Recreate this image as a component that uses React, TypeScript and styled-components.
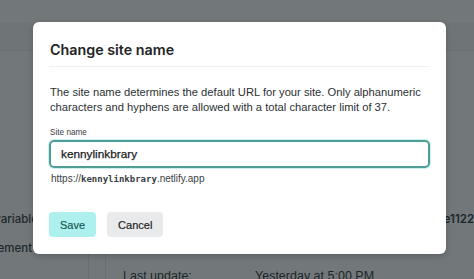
import React from "react";
import styled, { createGlobalStyle } from "styled-components";

const Global = createGlobalStyle`
  html, body { margin: 0; padding: 0; }
  body {
    width: 474px;
    height: 279px;
    overflow: hidden;
    background: #fff;
    font-family: "Liberation Sans", Arial, sans-serif;
  }
`;

const Page = styled.div`
  position: relative;
  width: 474px;
  height: 279px;
  overflow: hidden;
  display: flex;
  flex-direction: column;
`;

const Header = styled.div`
  flex-shrink: 0;
  height: 23px;
  background: #fff;
`;

const SubBar = styled.div`
  flex-shrink: 0;
  height: 27px;
  background: #f7f8f8;
  border-bottom: 1px solid #e6e8e9;
`;

const Body = styled.div`
  flex: 1;
  min-height: 0;
  overflow: hidden;
  display: flex;
`;

const Sidebar = styled.div`
  width: 88px;
  flex-shrink: 0;
  border-right: 1px solid #e4e6e7;
  display: flex;
  flex-direction: column;
  padding-top: 162px;
  gap: 16px;
  overflow: hidden;
`;

const SideItem = styled.div<{ $shift: number }>`
  margin-left: ${p => p.$shift}px;
  font-family: Inter, sans-serif;
  font-size: 11.5px;
  line-height: 13px;
  font-weight: 500;
  color: #2e3438;
  white-space: nowrap;
`;

const Gutter = styled.div`
  width: 16px;
  flex-shrink: 0;
  border-right: 1px solid #e4e6e7;
`;

const Main = styled.div`
  flex: 1;
  display: flex;
  flex-direction: column;
  padding-top: 162px;
  overflow: hidden;
`;

const IdRow = styled.div`
  align-self: flex-end;
  margin-right: -14px;
  font-family: Inter, sans-serif;
  font-size: 11.5px;
  line-height: 13px;
  font-weight: 600;
  color: #2e3438;
`;

const InfoRow = styled.div`
  margin-top: 43px;
  padding-left: 17px;
  display: grid;
  grid-template-columns: 132px auto;
  font-size: 12.5px;
  line-height: 14px;
  color: #2e3438;
`;

const Overlay = styled.div`
  position: absolute;
  inset: 0;
  background: rgba(20, 30, 34, 0.6);
  display: flex;
  align-items: flex-start;
  padding: 22px 0 0 33px;
`;

const Modal = styled.div`
  width: 413px;
  height: 232px;
  box-sizing: border-box;
  background: #fff;
  border-radius: 6px;
  box-shadow: 0 2px 6px rgba(0, 0, 0, 0.2);
  padding: 0 16px;
  display: flex;
  flex-direction: column;
`;

const Title = styled.h2`
  margin: 0;
  padding: 19px 0 7px 1px;
  font-family: Inter, sans-serif;
  font-size: 14.3px;
  line-height: 18px;
  font-weight: 600;
  color: #1f2426;
  border-bottom: 1px solid #eff0f1;
`;

const Text = styled.p`
  margin: 18px 0 0 1px;
  font-size: 11.2px;
  line-height: 15px;
  color: #2b3033;
`;

const Label = styled.label`
  display: block;
  margin: 13px 0 2px 1px;
  font-size: 8.2px;
  line-height: 10px;
  color: #3a4044;
`;

const Input = styled.div`
  height: 28px;
  box-sizing: border-box;
  border: 2px solid #4f9d95;
  border-radius: 5px;
  box-shadow: 0 0 0 1px #c9f1ef;
  padding: 0 10px;
  display: flex;
  align-items: center;
  font-size: 11.8px;
  color: #1c2022;
  -webkit-text-stroke: 0.25px #1c2022;
`;

const Hint = styled.div`
  margin: 5px 0 0 2px;
  font-size: 10px;
  line-height: 12px;
  color: #3a4044;
`;

const Mono = styled.span`
  font-family: "DejaVu Sans Mono", "Liberation Mono", monospace;
  font-size: 9px;
  font-weight: 600;
`;

const Actions = styled.div`
  margin-top: 27px;
  display: flex;
  gap: 11px;
`;

const Button = styled.button<{ $primary?: boolean }>`
  height: 25px;
  padding: 0 11px;
  border: none;
  border-radius: 4px;
  font-family: inherit;
  font-size: 11px;
  background: ${p => (p.$primary ? "#aef0ee" : "#e9eaeb")};
  color: ${p => (p.$primary ? "#1d5a57" : "#1f2426")};
  -webkit-text-stroke: 0.2px currentColor;
`;

export default function App() {
  return (
    <>
      <Global />
      <Page>
        <Header />
        <SubBar />
        <Body>
          <Sidebar>
            <SideItem $shift={-78}>Environment variables</SideItem>
            <SideItem $shift={-40}>Management</SideItem>
          </Sidebar>
          <Gutter />
          <Main>
            <IdRow>e11225a</IdRow>
            <InfoRow>
              <span>Last update:</span>
              <span>Yesterday at 5:00 PM</span>
            </InfoRow>
          </Main>
        </Body>
        <Overlay>
          <Modal>
            <Title>Change site name</Title>
            <Text>
              The site name determines the default URL for your site. Only alphanumeric
              characters and hyphens are allowed with a total character limit of 37.
            </Text>
            <Label>Site name</Label>
            <Input>kennylinkbrary</Input>
            <Hint>
              https://<Mono>kennylinkbrary</Mono>.netlify.app
            </Hint>
            <Actions>
              <Button $primary>Save</Button>
              <Button>Cancel</Button>
            </Actions>
          </Modal>
        </Overlay>
      </Page>
    </>
  );
}
